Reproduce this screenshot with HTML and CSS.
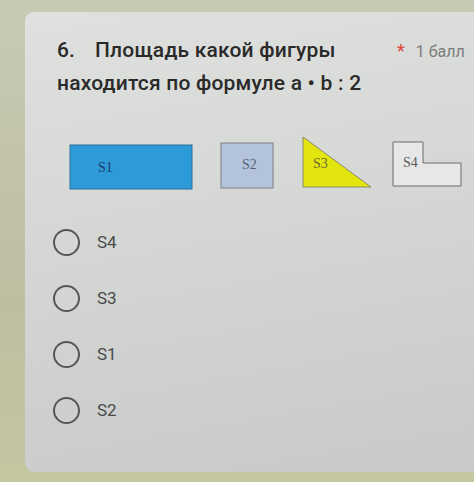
FILE: index.html
```html
<!DOCTYPE html>
<html lang="ru">
<head>
<meta charset="utf-8">
<link rel="stylesheet" href="styles.css">
</head>
<body>
<div class="card">
  <div class="header">
    <div class="title">
      <div class="line"><span class="num">6.</span><span class="q">Площадь какой фигуры</span></div>
      <div class="line q">находится по формуле a • b : 2</div>
    </div>
    <div class="points"><span class="req">*</span><span class="pts">1 балл</span></div>
  </div>
  <svg class="figures" width="449" height="70" viewBox="0 0 449 70" xmlns="http://www.w3.org/2000/svg">
    <rect x="45" y="15" width="122" height="44" fill="#2d9bd8" stroke="#2b6f9c" stroke-width="1"/>
    <text x="73" y="42" class="fl" fill="#1d3c6e">S1</text>
    <rect x="196" y="13" width="52" height="45" fill="#b4c3dc" stroke="#7a7d84" stroke-width="1"/>
    <text x="217" y="39" class="fl" fill="#5a6274">S2</text>
    <polygon points="278,7 278,57 346,57" fill="#e3e50f" stroke="#8a8a6a" stroke-width="1"/>
    <text x="288" y="38" class="fl" fill="#6e6a2a">S3</text>
    <path d="M368 12 H398 V33 H436 V56 H368 Z" fill="#e6e7e6" stroke="#6a6a6a" stroke-width="1"/>
    <text x="378" y="37" class="fl" fill="#5a5a5a">S4</text>
  </svg>
  <div class="options">
    <div class="opt"><span class="radio"></span><span class="lbl">S4</span></div>
    <div class="opt"><span class="radio"></span><span class="lbl">S3</span></div>
    <div class="opt"><span class="radio"></span><span class="lbl">S1</span></div>
    <div class="opt"><span class="radio"></span><span class="lbl">S2</span></div>
  </div>
</div>
</body>
</html>
```
FILE: styles.css
```css
html, body {
  margin: 0;
  padding: 0;
}
body {
  width: 474px;
  height: 482px;
  overflow: hidden;
  background: linear-gradient(180deg, #c9cab5 0%, #bdbea2 60%, #c4c7a0 100%);
  font-family: Roboto, "Noto Sans", sans-serif;
}
.card {
  margin: 12px 0 0 25px;
  height: 460px;
  border-radius: 9px 0 0 9px;
  background: linear-gradient(170deg, #dfe1de 0%, #d6d8d6 40%, #c8cac9 100%);
  box-sizing: border-box;
  padding-top: 22px;
}
.header {
  display: flex;
  padding-left: 32px;
}
.title {
  width: 330px;
  font-size: 21px;
  font-weight: 500;
  line-height: 33px;
  color: #2a2a2a;
}
.line {
  white-space: nowrap;
}
.num {
  display: inline-block;
  width: 38px;
}
.q {
  letter-spacing: 0.2px;
}
.points {
  display: flex;
  align-items: baseline;
  margin-left: 10px;
  padding-top: 6px;
  font-size: 16px;
  color: #7a7c7c;
  white-space: nowrap;
}
.req {
  color: #d9473b;
  font-size: 18px;
}
.pts {
  margin-left: 11px;
}
.figures {
  display: block;
  margin-top: 30px;
}
.fl {
  font-family: "Liberation Serif", serif;
  font-size: 14px;
}
.options {
  margin-top: 14px;
  padding-left: 28px;
}
.opt {
  display: flex;
  align-items: center;
  height: 56px;
}
.radio {
  width: 23px;
  height: 23px;
  border: 2px solid #555756;
  border-radius: 50%;
}
.lbl {
  margin-left: 17px;
  font-size: 17px;
  color: #484a4a;
}
```
